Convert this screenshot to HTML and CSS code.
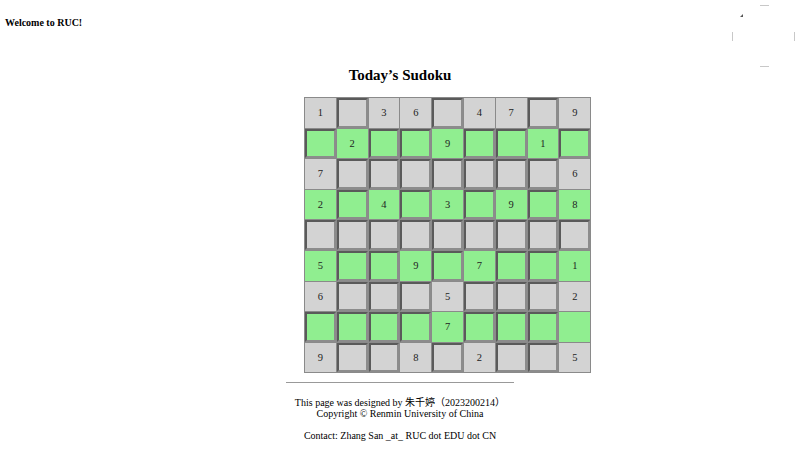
FILE: index.html
```html
<!DOCTYPE html>
<html>
<head>
<meta charset="utf-8">
<link rel="stylesheet" href="styles.css">
</head>
<body>
<header class="top">
  <h5 class="welcome">Welcome to RUC!</h5>
  <div class="avatar">
    <svg width="64" height="64" viewBox="0 0 64 64">
      <g stroke="#c8c8c8" stroke-width="1" fill="none">
        <line x1="28" y1="1.5" x2="37" y2="1.5"/>
        <line x1="28" y1="62.5" x2="37" y2="62.5"/>
        <line x1="0.5" y1="28" x2="0.5" y2="37"/>
        <line x1="62.5" y1="28" x2="62.5" y2="37"/>
      </g>
      <path d="M8 13 L11 10 L11 13 Z" fill="#555"/>
    </svg>
  </div>
</header>
<main class="content">
  <h3 class="title">Today’s Sudoku</h3>
  <table class="sudoku">
    <tr class="g">
      <td>1</td><td><input></td><td>3</td><td>6</td><td><input></td><td>4</td><td>7</td><td><input></td><td>9</td>
    </tr>
    <tr class="l">
      <td><input></td><td>2</td><td><input></td><td><input></td><td>9</td><td><input></td><td><input></td><td>1</td><td><input></td>
    </tr>
    <tr class="g">
      <td>7</td><td><input></td><td><input></td><td><input></td><td><input></td><td><input></td><td><input></td><td><input></td><td>6</td>
    </tr>
    <tr class="l">
      <td>2</td><td><input></td><td>4</td><td><input></td><td>3</td><td><input></td><td>9</td><td><input></td><td>8</td>
    </tr>
    <tr class="g">
      <td><input></td><td><input></td><td><input></td><td><input></td><td><input></td><td><input></td><td><input></td><td><input></td><td><input></td>
    </tr>
    <tr class="l">
      <td>5</td><td><input></td><td><input></td><td>9</td><td><input></td><td>7</td><td><input></td><td><input></td><td>1</td>
    </tr>
    <tr class="g">
      <td>6</td><td><input></td><td><input></td><td><input></td><td>5</td><td><input></td><td><input></td><td><input></td><td>2</td>
    </tr>
    <tr class="l">
      <td><input></td><td><input></td><td><input></td><td><input></td><td>7</td><td><input></td><td><input></td><td><input></td><td></td>
    </tr>
    <tr class="g">
      <td>9</td><td><input></td><td><input></td><td>8</td><td><input></td><td>2</td><td><input></td><td><input></td><td>5</td>
    </tr>
  </table>
  <hr class="rule">
  <footer class="foot">
    <p class="credit">This page was designed by 朱千婷（2023200214）<br>Copyright © Renmin University of China</p>
    <p class="contact">Contact: Zhang San _at_ RUC dot EDU dot CN</p>
  </footer>
</main>
</body>
</html>
```
FILE: styles.css
```css
html, body {
  margin: 0;
  padding: 0;
  background: #fff;
  font-family: "Liberation Serif", "Noto Sans CJK SC", serif;
  color: #000;
}
.top {
  display: flex;
  justify-content: space-between;
  align-items: flex-start;
  padding: 4px 4px 0 5px;
  height: 30px;
}
.welcome {
  margin: 13px 0 0 0;
  font-size: 10px;
  line-height: 12px;
  font-weight: bold;
}
.avatar {
  width: 64px;
  height: 64px;
}
.avatar svg {
  display: block;
}
.content {
  display: flex;
  flex-direction: column;
}
.title {
  margin: 33px 0 0 0;
  text-align: center;
  font-size: 15px;
  line-height: 17px;
  font-weight: bold;
}
.sudoku {
  align-self: flex-start;
  margin: 13px 0 0 304px;
  border-collapse: collapse;
  border: 1px solid #808080;
}
.sudoku td {
  width: 30.8px;
  height: 29.6px;
  padding: 0;
  border: 1px solid #8a8a8a;
  text-align: center;
  vertical-align: middle;
  font-size: 10.5px;
  color: #222;
}
.sudoku tr.g td {
  background: #d3d3d3;
}
.sudoku tr.l td {
  background: #90ee90;
}
.sudoku input {
  display: block;
  box-sizing: border-box;
  width: 30.8px;
  height: 29.6px;
  margin: 0;
  padding: 0;
  border: 2px solid;
  border-color: #5a5a5a #8c8c8c #8c8c8c #5a5a5a;
  background: transparent;
}
.rule {
  width: 228px;
  margin: 9px auto 0 auto;
  border: 0;
  border-top: 1px solid #999;
}
.foot {
  text-align: center;
  font-size: 10px;
}
.credit {
  margin: 14px 0 0 0;
  line-height: 11px;
}
.contact {
  margin: 11px 0 0 0;
  line-height: 11px;
}
```
